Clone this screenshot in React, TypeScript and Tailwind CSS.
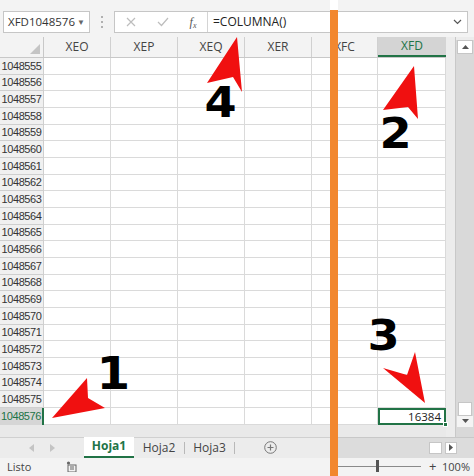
const rows = Array.from({ length: 22 }, (_, i) => 1048555 + i);

const cols = [
  { label: 'XEO', w: 'w-[67px]' },
  { label: 'XEP', w: 'w-[67px]' },
  { label: 'XEQ', w: 'w-[67px]' },
  { label: 'XER', w: 'w-[67px]' },
  { label: 'XFC', w: 'w-[66px]' },
  { label: 'XFD', w: 'w-[68px]' },
];

function FormulaBar() {
  return (
    <div className="h-[37px] bg-[#f3f3f3] flex items-start pt-[11px] pl-[3px]">
      <div className="w-[87px] h-[22px] bg-white border border-[#c6c6c6] flex items-center justify-between px-[4px] text-[11.5px] text-[#333]">
        <span>XFD1048576</span>
        <span className="text-[8px] text-[#666]">▼</span>
      </div>
      <div className="w-[24px] flex flex-col items-center justify-center h-[22px] gap-[3px]">
        <span className="w-[2px] h-[2px] bg-[#b0b0b0]" />
        <span className="w-[2px] h-[2px] bg-[#b0b0b0]" />
        <span className="w-[2px] h-[2px] bg-[#b0b0b0]" />
      </div>
      <div className="w-[354px] h-[22px] bg-white border border-[#c6c6c6] flex items-center">
        <div className="w-[93px] h-full flex items-center justify-around border-r border-[#d4d4d4] text-[#b8b8b8]">
          <svg width="10" height="10" viewBox="0 0 10 10">
            <path d="M1 1 L9 9 M9 1 L1 9" stroke="#bdbdbd" strokeWidth="1.2" fill="none" />
          </svg>
          <svg width="12" height="10" viewBox="0 0 12 10">
            <path d="M1 5 L4.5 8.5 L11 1" stroke="#bdbdbd" strokeWidth="1.2" fill="none" />
          </svg>
          <span className="text-[12px] italic text-[#555] [font-family:'Liberation_Serif',serif]">
            f<sub className="text-[8px]">x</sub>
          </span>
        </div>
        <span className="pl-[5px] flex-1 text-[12px] text-[#222]">=COLUMNA()</span>
        <svg width="9" height="6" viewBox="0 0 9 6" className="mr-[5px]">
          <path d="M1 1 L4.5 4.5 L8 1" stroke="#555" strokeWidth="1.2" fill="none" />
        </svg>
      </div>
    </div>
  );
}

function Grid() {
  return (
    <div className="flex">
      <div className="w-[446px]">
        <div className="flex h-[21px] bg-[#f3f3f3] border-b border-[#c8c8c8]">
          <div className="w-[44px] border-r border-[#c8c8c8] relative">
            <svg width="10" height="10" viewBox="0 0 10 10" className="absolute right-[3px] bottom-[3px]">
              <path d="M10 0 L10 10 L0 10 Z" fill="#c4c4c4" />
            </svg>
          </div>
          {cols.map((c) =>
            c.label === 'XFD' ? (
              <div
                key={c.label}
                className={`${c.w} flex items-center justify-center bg-[#d4d4d4] border-b-2 border-[#217346] text-[12px] text-[#217346]`}
              >
                {c.label}
              </div>
            ) : (
              <div
                key={c.label}
                className={`${c.w} flex items-center justify-center border-r border-[#d0d0d0] text-[12px] text-[#444]`}
              >
                {c.label}
              </div>
            )
          )}
        </div>
        {rows.map((r) => {
          const last = r === 1048576;
          return (
            <div key={r} className="flex h-[16.68px]">
              <div
                className={
                  last
                    ? 'w-[44px] flex items-center justify-center bg-[#d6d6d6] border-r-2 border-[#217346] text-[11px] tracking-[-0.4px] text-[#217346] [font-family:Liberation_Sans,sans-serif]'
                    : 'w-[44px] flex items-center justify-center bg-[#f0f0f0] border-r border-b border-[#cfcfcf] text-[11px] tracking-[-0.4px] text-[#333] [font-family:Liberation_Sans,sans-serif]'
                }
              >
                {r}
              </div>
              {cols.map((c) =>
                last && c.label === 'XFD' ? (
                  <div
                    key={c.label}
                    className={`${c.w} relative border-2 border-[#217346] flex items-center justify-end pr-[3px] text-[11.5px] text-[#222]`}
                  >
                    16384
                    <span className="absolute -right-[4px] -bottom-[4px] w-[5px] h-[5px] bg-[#217346] border border-white" />
                  </div>
                ) : (
                  <div key={c.label} className={`${c.w} bg-white border-r border-b border-[#dadada]`} />
                )
              )}
            </div>
          );
        })}
        <div className="h-[12px] bg-[#e9e9e9]" />
      </div>
      <div className="w-[28px] bg-[#ececec] flex">
        <div className="w-[9px]" />
        <div className="flex-1 flex flex-col border-l border-[#c8c8c8] bg-[#d9d9d9]">
          <div className="h-[3px] bg-[#ececec]" />
          <div className="mx-[1px] h-[14px] bg-white border border-[#c6c6c6] flex items-center justify-center">
            <svg width="7" height="4" viewBox="0 0 7 4">
              <path d="M0 4 L3.5 0 L7 4 Z" fill="#555" />
            </svg>
          </div>
          <div className="flex-1" />
          <div className="mx-[2px] h-[14px] bg-white border border-[#c6c6c6]" />
          <div className="mx-[1px] h-[11px] bg-[#f4f4f4] flex items-center justify-center mb-[10px]">
            <svg width="7" height="4" viewBox="0 0 7 4">
              <path d="M0 0 L7 0 L3.5 4 Z" fill="#555" />
            </svg>
          </div>
        </div>
      </div>
    </div>
  );
}

function TabBar() {
  return (
    <div className="flex h-[21px]">
      <div className="w-[334px] bg-[#ececec] border-t border-[#d0d0d0] flex items-stretch">
        <div className="w-[84px] flex items-center justify-center gap-[16px] text-[#c0c0c0]">
          <svg width="5" height="8" viewBox="0 0 5 8">
            <path d="M5 0 L0 4 L5 8 Z" fill="#c4c4c4" />
          </svg>
          <svg width="5" height="8" viewBox="0 0 5 8">
            <path d="M0 0 L5 4 L0 8 Z" fill="#c4c4c4" />
          </svg>
        </div>
        <div className="w-[50px] -mt-[1px] bg-white border-b-2 border-[#217346] flex items-center justify-center text-[12px] font-bold text-[#217346]">
          Hoja1
        </div>
        <div className="w-[50px] flex items-center justify-center text-[12px] text-[#444]">Hoja2</div>
        <div className="w-px my-[4px] bg-[#b8b8b8]" />
        <div className="w-[49px] flex items-center justify-center text-[12px] text-[#444]">Hoja3</div>
        <div className="w-px my-[4px] bg-[#b8b8b8]" />
        <div className="pl-[29px] flex items-center">
          <svg width="13" height="13" viewBox="0 0 13 13">
            <circle cx="6.5" cy="6.5" r="5.8" stroke="#777" strokeWidth="1" fill="none" />
            <path d="M6.5 3.5 L6.5 9.5 M3.5 6.5 L9.5 6.5" stroke="#777" strokeWidth="1.2" />
          </svg>
        </div>
      </div>
      <div className="flex-1 bg-[#dcdcdc] border-t border-[#c8c8c8] flex items-center justify-end pr-[17px] gap-[3px]">
        <div className="w-[13px] h-[12px] bg-white border border-[#c6c6c6]" />
        <div className="w-[12px] h-[12px] bg-white border border-[#c6c6c6] flex items-center justify-center">
          <svg width="4" height="7" viewBox="0 0 4 7">
            <path d="M0 0 L4 3.5 L0 7 Z" fill="#555" />
          </svg>
        </div>
      </div>
    </div>
  );
}

function StatusBar() {
  return (
    <div className="h-[18px] bg-[#f3f3f3] flex items-center text-[11px] text-[#444]">
      <span className="pl-[7px] w-[66px]">Listo</span>
      <svg width="11" height="11" viewBox="0 0 11 11">
        <circle cx="2.5" cy="2" r="1.6" fill="#666" />
        <rect x="2" y="4" width="8" height="7" fill="none" stroke="#666" strokeWidth="1" />
        <path d="M4 6 H8 M4 8 H8" stroke="#666" strokeWidth="1" />
      </svg>
      <div className="flex-1" />
      <div className="relative w-[86px] h-[1px] bg-[#8a8a8a] mr-[8px]">
        <span className="absolute left-[41px] -top-[6px] w-[3px] h-[12px] bg-[#555]" />
      </div>
      <span className="text-[13px] text-[#444] w-[12px]">+</span>
      <span className="pl-[1px] pr-[4px]">100%</span>
    </div>
  );
}

function Annotations() {
  return (
    <>
      <svg className="absolute inset-0 pointer-events-none" width="474" height="476" viewBox="0 0 474 476">
        <polygon points="52,418 87,378 88,398 105,408" fill="#f01010" />
        <polygon points="414,66 383,110 408,107 418,119" fill="#f01010" />
        <polygon points="425,403 383,368 407,375 415,352" fill="#f01010" />
        <polygon points="237,37 207,83 233,77 242,92" fill="#f01010" />
      </svg>
      <div className="absolute left-[98px] top-[352px] text-[44px] leading-none font-bold text-black [font-family:'DejaVu_Sans',sans-serif] scale-x-110">
        1
      </div>
      <div className="absolute left-[381px] top-[113px] text-[42px] leading-none font-bold text-black [font-family:'DejaVu_Sans',sans-serif] scale-x-110">
        2
      </div>
      <div className="absolute left-[369px] top-[315px] text-[42px] leading-none font-bold text-black [font-family:'DejaVu_Sans',sans-serif] scale-x-110">
        3
      </div>
      <div className="absolute left-[206px] top-[82px] text-[42px] leading-none font-bold text-black [font-family:'DejaVu_Sans',sans-serif] scale-x-110">
        4
      </div>
    </>
  );
}

export default function App() {
  return (
    <div className="relative w-[474px] h-[476px] overflow-hidden bg-white [font-family:'Open_Sans','Liberation_Sans',sans-serif]">
      <FormulaBar />
      <Grid />
      <TabBar />
      <StatusBar />
      <div className="absolute left-[330px] top-[10px] bottom-0 w-[8px] bg-[#f2872e]" />
      <div className="absolute left-[330px] top-0 h-[10px] w-[8px] bg-white" />
      <Annotations />
    </div>
  );
}
